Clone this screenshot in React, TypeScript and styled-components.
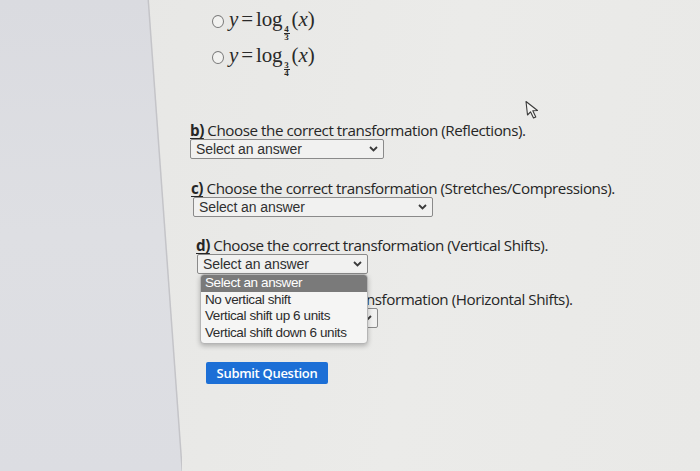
import React from 'react';
import styled, { createGlobalStyle } from 'styled-components';

const GlobalStyle = createGlobalStyle`
  html, body {
    margin: 0;
    padding: 0;
    background: #e8e8e6;
  }
  body {
    width: 700px;
    height: 471px;
    overflow: hidden;
  }
`;

const Page = styled.div`
  position: relative;
  display: flex;
  flex-direction: row;
  width: 700px;
  height: 471px;
  background: linear-gradient(100deg, #e6e6e4 0%, #ebebe9 60%, #e9e9e7 100%);
`;

const SidebarEdge = styled.div`
  flex: 0 0 182px;
  height: 100%;
  background: #c4c4c8;
  clip-path: polygon(0 0, 149px 0, 183px 100%, 0 100%);
  display: flex;
`;

const SidebarFill = styled.div`
  flex: 1;
  background: linear-gradient(180deg, #dadbe0 0%, #dedfe3 50%, #dcdde2 100%);
  clip-path: polygon(0 0, 147.5px 0, 181.5px 100%, 0 100%);
`;

const Main = styled.main`
  flex: 1;
  display: flex;
  flex-direction: column;
  padding-top: 3px;
`;

const OptionList = styled.div`
  display: flex;
  flex-direction: column;
  margin-left: 30px;
`;

const OptionRow = styled.label`
  display: flex;
  align-items: center;
  gap: 5px;
  height: 36px;
  font-family: 'Liberation Serif', 'DejaVu Serif', serif;
  font-size: 21px;
  color: #2a2a2a;
`;

const RadioCircle = styled.span`
  width: 10px;
  height: 11px;
  border: 1.6px solid #7a7a7a;
  border-radius: 50%;
  background: #f2f2f0;
  margin-top: 1px;
`;

const MathExpr = styled.span`
  display: inline-flex;
  align-items: baseline;
  letter-spacing: -0.1px;
`;

const MathVar = styled.i`
  font-style: italic;
`;

const MathOp = styled.span`
  margin: 0 3px;
`;

const Frac = styled.span`
  display: inline-flex;
  flex-direction: column;
  align-items: center;
  font-size: 9px;
  line-height: 7.5px;
  font-weight: bold;
  position: relative;
  top: 6px;
  margin: 0 2px 0 1px;
`;

const FracBar = styled.span`
  width: 6px;
  height: 0.9px;
  background: #2a2a2a;
`;

const Part = styled.section<{ $indent: number; $top: number }>`
  position: relative;
  display: flex;
  flex-direction: column;
  align-items: flex-start;
  margin-left: ${(p) => p.$indent}px;
  margin-top: ${(p) => p.$top}px;
`;

const Question = styled.div`
  font-family: 'Open Sans', 'DejaVu Sans', sans-serif;
  font-size: 15.2px;
  line-height: 18px;
  letter-spacing: -0.45px;
  color: #262626;
  white-space: nowrap;
`;

const PartTag = styled.span`
  font-weight: 700;
  text-decoration: underline;
  text-underline-offset: 2px;
`;

const SelectBox = styled.div<{ $width: number; $shift?: number }>`
  box-sizing: border-box;
  display: flex;
  align-items: center;
  justify-content: space-between;
  width: ${(p) => p.$width}px;
  height: 20px;
  margin-left: ${(p) => p.$shift ?? 0}px;
  padding: 0 5px 0 5px;
  border: 1px solid #8a8a8a;
  border-radius: 2px;
  background: #f1f1f0;
  font-family: 'Liberation Sans', Arial, sans-serif;
  font-size: 14px;
  letter-spacing: -0.1px;
  color: #303030;
`;

const Dropdown = styled.ul`
  position: absolute;
  top: 38px;
  left: 4px;
  width: 168px;
  margin: 0;
  padding: 0 0 2px 0;
  list-style: none;
  box-sizing: border-box;
  background: #f5f5f4;
  border: 1px solid #b5b5b5;
  border-radius: 4px;
  box-shadow: 0 2px 5px rgba(0, 0, 0, 0.25);
  overflow: hidden;
  z-index: 2;
`;

const DropItem = styled.li<{ $active?: boolean }>`
  height: 16.5px;
  line-height: 16.5px;
  padding: 0 4px;
  font-family: 'Liberation Sans', Arial, sans-serif;
  font-size: 13.5px;
  letter-spacing: -0.4px;
  color: ${(p) => (p.$active ? '#ffffff' : '#2c2c2c')};
  background: ${(p) => (p.$active ? '#7a7a7a' : 'transparent')};
  white-space: nowrap;
`;

const SubmitButton = styled.button`
  align-self: flex-start;
  margin-left: 24px;
  margin-top: 34px;
  height: 22px;
  width: 122px;
  padding: 0;
  border: none;
  border-radius: 2px;
  background: #1c6fd6;
  color: #ffffff;
  font-family: 'Open Sans', 'DejaVu Sans', sans-serif;
  font-size: 13px;
  font-weight: 600;
  letter-spacing: -0.3px;
`;

const Cursor = styled.svg`
  position: absolute;
  left: 524px;
  top: 100px;
`;

const Chevron = () => (
  <svg width="9" height="6" viewBox="0 0 9 6">
    <path d="M1 1 L4.5 4.5 L8 1" fill="none" stroke="#3a3a3a" strokeWidth="1.8" />
  </svg>
);

const LogOption = ({ num, den }: { num: string; den: string }) => (
  <OptionRow>
    <RadioCircle />
    <MathExpr>
      <MathVar>y</MathVar>
      <MathOp>=</MathOp>
      <span>log</span>
      <Frac>
        <span>{num}</span>
        <FracBar />
        <span>{den}</span>
      </Frac>
      <span>(</span>
      <MathVar>x</MathVar>
      <span>)</span>
    </MathExpr>
  </OptionRow>
);

const App: React.FC = () => {
  return (
    <>
      <GlobalStyle />
      <Page>
        <SidebarEdge>
          <SidebarFill />
        </SidebarEdge>
        <Main>
          <OptionList>
            <LogOption num="4" den="3" />
            <LogOption num="3" den="4" />
          </OptionList>

          <Part $indent={8} $top={46}>
            <Question>
              <PartTag>b)</PartTag> Choose the correct transformation (Reflections).
            </Question>
            <SelectBox $width={194}>
              Select an answer
              <Chevron />
            </SelectBox>
          </Part>

          <Part $indent={9} $top={20}>
            <Question>
              <PartTag>c)</PartTag> Choose the correct transformation (Stretches/Compressions).
            </Question>
            <SelectBox $width={240} $shift={2}>
              Select an answer
              <Chevron />
            </SelectBox>
          </Part>

          <Part $indent={14} $top={19}>
            <Question>
              <PartTag>d)</PartTag> Choose the correct transformation (Vertical Shifts).
            </Question>
            <SelectBox $width={171} $shift={1}>
              Select an answer
              <Chevron />
            </SelectBox>
            <Dropdown>
              <DropItem $active>Select an answer</DropItem>
              <DropItem>No vertical shift</DropItem>
              <DropItem>Vertical shift up 6 units</DropItem>
              <DropItem>Vertical shift down 6 units</DropItem>
            </Dropdown>
          </Part>

          <Part $indent={19} $top={16}>
            <Question>
              <PartTag>e)</PartTag> Choose the correct transformation (Horizontal Shifts).
            </Question>
            <SelectBox $width={177}>
              Select an answer
              <Chevron />
            </SelectBox>
          </Part>

          <SubmitButton>Submit Question</SubmitButton>
        </Main>

        <Cursor width="17" height="22" viewBox="0 0 17 22">
          <path
            d="M2 1.5 L3.5 15 L6.5 11.8 L9.5 18 L11.8 17 L8.8 10.8 L13.5 10.5 Z"
            fill="#f4f4f2"
            stroke="#3a3a3a"
            strokeWidth="1.1"
            strokeLinejoin="round"
          />
        </Cursor>
      </Page>
    </>
  );
};

export default App;
